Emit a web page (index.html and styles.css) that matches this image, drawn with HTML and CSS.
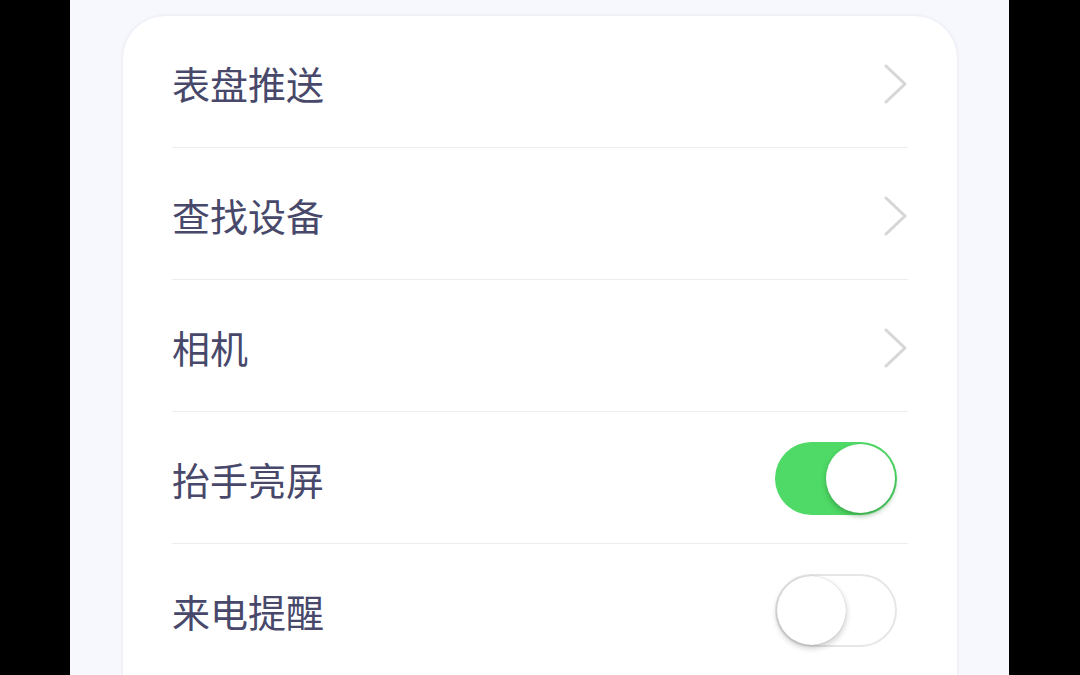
FILE: index.html
```html
<!DOCTYPE html>
<html lang="zh">
<head>
<meta charset="utf-8">
<link rel="stylesheet" href="styles.css">
</head>
<body>
<div class="screen">
  <div class="card">
    <div class="row">
      <span class="label">表盘推送</span>
      <svg class="chev" width="26" height="40" viewBox="0 0 26 40"><path d="M3 2 L22 20 L3 38" fill="none" stroke="#d6d6d9" stroke-width="3" stroke-linecap="round" stroke-linejoin="round"/></svg>
    </div>
    <div class="row">
      <span class="label">查找设备</span>
      <svg class="chev" width="26" height="40" viewBox="0 0 26 40"><path d="M3 2 L22 20 L3 38" fill="none" stroke="#d6d6d9" stroke-width="3" stroke-linecap="round" stroke-linejoin="round"/></svg>
    </div>
    <div class="row">
      <span class="label">相机</span>
      <svg class="chev" width="26" height="40" viewBox="0 0 26 40"><path d="M3 2 L22 20 L3 38" fill="none" stroke="#d6d6d9" stroke-width="3" stroke-linecap="round" stroke-linejoin="round"/></svg>
    </div>
    <div class="row">
      <span class="label">抬手亮屏</span>
      <div class="toggle on"><div class="knob"></div></div>
    </div>
    <div class="row">
      <span class="label">来电提醒</span>
      <div class="toggle off"><div class="knob"></div></div>
    </div>
  </div>
</div>
</body>
</html>
```
FILE: styles.css
```css
html, body {
  margin: 0;
  padding: 0;
  background: #000;
  height: 675px;
  overflow: hidden;
}
.screen {
  margin: 0 71px 0 70px;
  height: 675px;
  background: #f7f8fd;
  padding-top: 16px;
  box-sizing: border-box;
  overflow: hidden;
}
.card {
  margin: 0 52px 0 53px;
  background: #fff;
  border-radius: 42px 42px 0 0;
  padding: 0 49px;
  box-shadow: 0 0 3px rgba(200, 202, 220, 0.5);
  height: 659px;
  overflow: hidden;
}
.row {
  height: 131px;
  display: flex;
  align-items: center;
  justify-content: space-between;
  border-bottom: 1.5px solid #ededf1;
}
.label {
  font-family: "Noto Sans CJK SC", "Noto Sans", sans-serif;
  font-size: 38px;
  color: #47486a;
  padding-top: 1px;
}
.chev {
  margin-right: -1px;
  margin-top: 4px;
}
.toggle {
  width: 122px;
  height: 73px;
  border-radius: 37px;
  position: relative;
  margin-right: 11px;
  margin-top: 2px;
  box-sizing: border-box;
}
.toggle.on {
  background: #4fd966;
}
.toggle.off {
  background: #fff;
  border: 2px solid #e6e6e8;
}
.knob {
  position: absolute;
  width: 69px;
  height: 69px;
  border-radius: 50%;
  background: #fff;
  top: 2px;
}
.toggle.on .knob {
  right: 2px;
  box-shadow: 0 3px 5px rgba(30, 110, 40, 0.45);
}
.toggle.off .knob {
  left: 0;
  top: 0;
  box-shadow: 0 3px 6px rgba(0, 0, 0, 0.22), 0 0 1px rgba(0,0,0,0.25);
}
```
